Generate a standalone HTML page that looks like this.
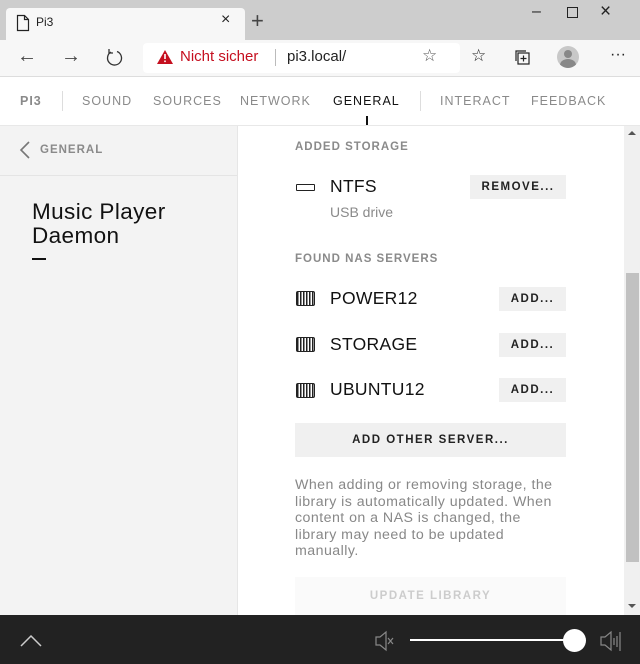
<!DOCTYPE html>
<html><head><meta charset="utf-8"><style>
*{margin:0;padding:0;box-sizing:border-box}
body{width:640px;height:664px;overflow:hidden;font-family:"Liberation Sans",sans-serif;background:#fff;position:relative}
.a{position:absolute}
.h{font-size:11.5px;font-weight:bold;letter-spacing:1px;color:#8a8a8a}
.n{font-size:17.5px;color:#111;letter-spacing:.3px}
.btn{background:#f0f0f0;font-size:11.5px;font-weight:bold;letter-spacing:1.5px;color:#222;display:flex;align-items:center;justify-content:center}
.nav{font-size:12.5px;letter-spacing:1px;color:#8a8a8a;top:94px}
.nas{width:19px;height:15px;border:1.5px solid #222;border-radius:2px;background:repeating-linear-gradient(90deg,#222 0 1.5px,#fff 1.5px 3px)}
</style></head><body>
<div class="a" style="left:0;top:0;width:640px;height:40px;background:#cdcdcd"></div>
<div class="a" style="left:6px;top:8px;width:239px;height:33px;background:#f7f7f7;border-radius:4px 4px 0 0"></div>
<svg class="a" style="left:16px;top:14px" width="14" height="18"><path d="M1.5 1.5h7l4 4v11h-11z M8.5 1.5v4h4" fill="none" stroke="#222" stroke-width="1.2"/></svg>
<div class="a" style="left:36px;top:15px;font-size:12px;color:#222">Pi3</div>
<div class="a" style="left:221px;top:11px;font-size:16px;color:#222">×</div>
<div class="a" style="left:251px;top:8px;font-size:22px;color:#444;font-weight:300">+</div>
<div class="a" style="left:532px;top:3px;font-size:16px;color:#222">–</div>
<div class="a" style="left:567px;top:7px;width:11px;height:11px;border:1.3px solid #222"></div>
<div class="a" style="left:600px;top:1px;font-size:19px;color:#222">×</div>
<div class="a" style="left:0;top:40px;width:640px;height:37px;background:#f7f7f7;border-bottom:1px solid #ddd"></div>
<div class="a" style="left:17px;top:45px;font-size:20px;color:#444">←</div>
<div class="a" style="left:61px;top:45px;font-size:20px;color:#444">→</div>
<svg class="a" style="left:105px;top:48px" width="20" height="20"><path d="M6 4A7 7 0 1 0 12 3.5" fill="none" stroke="#333" stroke-width="1.3"/><path d="M4 1v4h4" fill="none" stroke="#333" stroke-width="1.3"/></svg>
<div class="a" style="left:143px;top:43px;width:317px;height:30px;background:#fff;border-radius:4px"></div>
<svg class="a" style="left:157px;top:50px" width="16" height="14"><path d="M8 0L16 14H0z" fill="#c50f1f"/><rect x="7.2" y="4" width="1.6" height="5" fill="#fff"/><rect x="7.2" y="10.5" width="1.6" height="1.6" fill="#fff"/></svg>
<div class="a" style="left:180px;top:48px;font-size:15px;color:#c50f1f">Nicht sicher</div>
<div class="a" style="left:275px;top:49px;width:1px;height:17px;background:#bbb"></div>
<div class="a" style="left:287px;top:48px;font-size:15px;color:#222">pi3.local/</div>
<div class="a" style="left:422px;top:46px;font-size:17px;color:#555">☆</div>
<div class="a" style="left:471px;top:46px;font-size:17px;color:#222">☆</div>
<svg class="a" style="left:514px;top:49px" width="17" height="17"><rect x="4" y="4" width="11" height="11" fill="none" stroke="#222" stroke-width="1.2"/><path d="M2 12V2h10" fill="none" stroke="#222" stroke-width="1.2"/><path d="M9.5 6.5v6M6.5 9.5h6" stroke="#222" stroke-width="1.2"/></svg>
<div class="a" style="left:557px;top:46px;width:22px;height:22px;border-radius:50%;background:#c8c8c8;overflow:hidden"><div class="a" style="left:7px;top:4px;width:8px;height:8px;border-radius:50%;background:#888"></div><div class="a" style="left:3px;top:13px;width:16px;height:12px;border-radius:50%;background:#888"></div></div>
<div class="a" style="left:610px;top:46px;font-size:16px;color:#222">···</div>
<div class="a" style="left:0;top:77px;width:640px;height:49px;background:#fff;border-bottom:1px solid #e8e8e8"></div>
<div class="a nav" style="left:20px;font-weight:bold">PI3</div>
<div class="a" style="left:62px;top:91px;width:1px;height:20px;background:#ddd"></div>
<div class="a nav" style="left:82px">SOUND</div>
<div class="a nav" style="left:153px">SOURCES</div>
<div class="a nav" style="left:240px">NETWORK</div>
<div class="a nav" style="left:333px;color:#111">GENERAL</div>
<div class="a" style="left:420px;top:91px;width:1px;height:20px;background:#ddd"></div>
<div class="a nav" style="left:440px">INTERACT</div>
<div class="a nav" style="left:531px">FEEDBACK</div>
<div class="a" style="left:366px;top:116px;width:2px;height:9px;background:#111"></div>
<div class="a" style="left:0;top:126px;width:238px;height:489px;background:#f3f3f3;border-right:1px solid #e6e6e6"></div>
<div class="a" style="left:0;top:175px;width:237px;height:1px;background:#e4e4e4"></div>
<svg class="a" style="left:19px;top:141px" width="12" height="18"><path d="M10 1L2 9l8 8" fill="none" stroke="#777" stroke-width="1.6"/></svg>
<div class="a h" style="left:40px;top:144px">GENERAL</div>
<div class="a" style="left:32px;top:200px;font-size:22.5px;line-height:24px;color:#111;letter-spacing:.4px">Music Player<br>Daemon</div>
<div class="a" style="left:32px;top:258px;width:14px;height:2px;background:#111"></div>
<div class="a h" style="left:295px;top:141px">ADDED STORAGE</div>
<div class="a" style="left:296px;top:184px;width:19px;height:7px;border:1.3px solid #222;border-radius:1px"></div>
<div class="a n" style="left:330px;top:176px">NTFS</div>
<div class="a" style="left:330px;top:204px;font-size:14px;color:#8a8a8a">USB drive</div>
<div class="a btn" style="left:470px;top:175px;width:96px;height:24px">REMOVE...</div>
<div class="a h" style="left:295px;top:253px">FOUND NAS SERVERS</div>
<div class="a nas" style="left:296px;top:291px"></div>
<div class="a n" style="left:330px;top:288px">POWER12</div>
<div class="a btn" style="left:499px;top:287px;width:67px;height:24px">ADD...</div>
<div class="a nas" style="left:296px;top:337px"></div>
<div class="a n" style="left:330px;top:334px">STORAGE</div>
<div class="a btn" style="left:499px;top:333px;width:67px;height:24px">ADD...</div>
<div class="a nas" style="left:296px;top:383px"></div>
<div class="a n" style="left:330px;top:379px">UBUNTU12</div>
<div class="a btn" style="left:499px;top:378px;width:67px;height:24px">ADD...</div>
<div class="a btn" style="left:295px;top:423px;width:271px;height:34px">ADD OTHER SERVER...</div>
<div class="a" style="left:295px;top:477px;white-space:nowrap;font-size:14.2px;line-height:16.5px;color:#888;letter-spacing:.45px">When adding or removing storage, the<br>library is automatically updated. When<br>content on a NAS is changed, the<br>library may need to be updated<br>manually.</div>
<div class="a btn" style="left:295px;top:577px;width:271px;height:38px;background:#fafafa;color:#ccc">UPDATE LIBRARY</div>
<div class="a" style="left:624px;top:126px;width:16px;height:489px;background:#f0f0f0"></div>
<div class="a" style="left:626px;top:273px;width:13px;height:289px;background:#c1c1c1"></div>
<div class="a" style="left:628px;top:131px;width:0;height:0;border:4px solid transparent;border-bottom-color:#555;border-top:0"></div>
<div class="a" style="left:628px;top:604px;width:0;height:0;border:4px solid transparent;border-top-color:#555;border-bottom:0"></div>
<div class="a" style="left:0;top:615px;width:640px;height:49px;background:#222"></div>
<svg class="a" style="left:20px;top:634px" width="22" height="14"><path d="M1 12L11 2l10 10" fill="none" stroke="#ccc" stroke-width="1.5"/></svg>
<svg class="a" style="left:374px;top:630px" width="24" height="22"><path d="M2 7h4l6-5v18l-6-5H2z" fill="none" stroke="#888" stroke-width="1.2"/><path d="M14 8l5 6M19 8l-5 6" stroke="#888" stroke-width="1.2"/></svg>
<div class="a" style="left:410px;top:639px;width:165px;height:2px;background:#fff"></div>
<div class="a" style="left:563px;top:629px;width:23px;height:23px;border-radius:50%;background:#fff"></div>
<svg class="a" style="left:599px;top:629px" width="24" height="24"><path d="M2 8h4l6-5v18l-6-5H2z" fill="none" stroke="#888" stroke-width="1.2"/><path d="M15 9v7M18 7v11M21 3v19" stroke="#888" stroke-width="1.2"/></svg>
</body></html>
